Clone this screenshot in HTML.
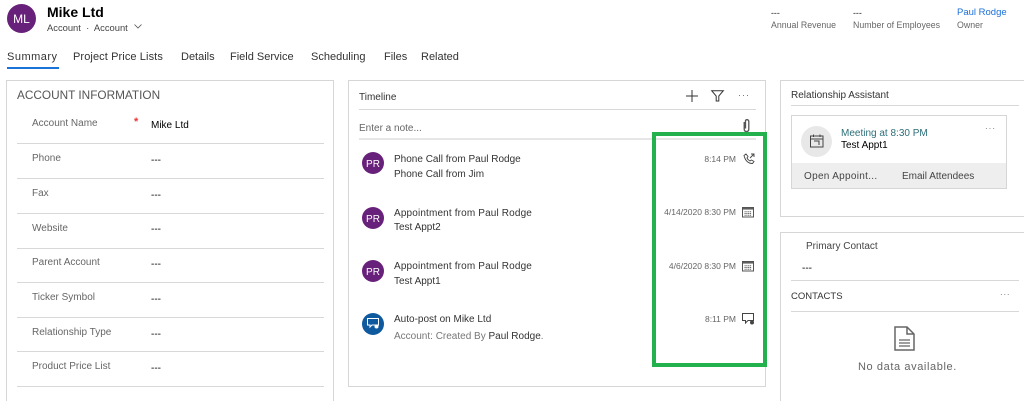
<!DOCTYPE html>
<html><head><meta charset="utf-8"><style>
html,body{margin:0;padding:0;background:#fff;overflow:hidden}
#r{position:relative;width:1024px;height:401px;overflow:hidden;background:#fff;font-family:"Liberation Sans",sans-serif;filter:blur(.3px)}
.t{position:absolute;white-space:nowrap;line-height:14px;font-size:10px;color:#333;margin-top:2px}
.l{position:absolute;height:1px;background:#d8d8d8}
.p{position:absolute;box-sizing:border-box;border:1px solid #d6d6d6;background:#fff}
.c{position:absolute;border-radius:50%;color:#fff;text-align:center;font-size:10px;line-height:25px;width:22px;height:22px;background:#68217a}
.g{color:#666}.k{color:#000}
.m{margin-top:1px}.z{margin-top:0}
.h{font-size:8.800px}
.tab{font-size:11px;margin-top:1px}
.a{letter-spacing:.15px}
.r{position:absolute;white-space:nowrap;line-height:14px;font-size:8.500px;color:#666;text-align:right;right:288px;margin-top:2px}
svg{position:absolute;overflow:visible}
</style></head><body><div id="r">
<div class="c" style="left:7px;top:4px;width:29px;height:29px;line-height:31px;font-size:12px">ML</div>
<div class="t k z" style="left:47px;top:5px;font-size:14px;font-weight:bold;line-height:15px">Mike Ltd</div>
<div class="t m" style="left:47px;top:20px;font-size:9.400px;color:#444">Account &nbsp;·&nbsp; Account</div>
<svg style="left:134px;top:24px" width="8" height="5"><path d="M.5.5 4 4 7.500.5" fill="none" stroke="#555" stroke-width=".8"/></svg>

<div class="t z h" style="left:771px;top:6px;color:#222">---</div>
<div class="t g z h" style="left:771px;top:18px">Annual Revenue</div>
<div class="t z h" style="left:853px;top:6px;color:#222">---</div>
<div class="t g z h" style="left:853px;top:18px">Number of Employees</div>
<div class="t z" style="left:957px;top:6px;font-size:9.500px;color:#1a6fd8">Paul Rodge</div>
<div class="t g z h" style="left:957px;top:18px">Owner</div>

<div class="t tab" style="left:7px;top:49px;letter-spacing:.5px">Summary</div>
<div class="t tab" style="left:73px;top:49px;letter-spacing:.1px">Project Price Lists</div>
<div class="t tab" style="left:181px;top:49px">Details</div>
<div class="t tab" style="left:230px;top:49px">Field Service</div>
<div class="t tab" style="left:311px;top:49px">Scheduling</div>
<div class="t tab" style="left:384px;top:49px">Files</div>
<div class="t tab" style="left:421px;top:49px">Related</div>
<div style="position:absolute;left:7px;top:67px;width:52px;height:2px;background:#1a73d8"></div>

<div class="p" style="left:6px;top:80px;width:328px;height:321px;border-bottom:0"></div>
<div class="t z" style="left:17px;top:88px;font-size:11.800px;color:#555">ACCOUNT INFORMATION</div>
<div class="t g" style="left:32px;top:115px">Account Name</div>
<div class="t z" style="left:134px;top:115px;color:#e33;font-size:11px;font-weight:bold">*</div>
<div class="t k" style="left:151px;top:117px">Mike Ltd</div>
<div class="l" style="left:17px;top:143px;width:307px"></div>
<div class="t g" style="left:32px;top:150px">Phone</div><div class="t k" style="left:151px;top:152px">---</div>
<div class="l" style="left:17px;top:178px;width:307px"></div>
<div class="t g" style="left:32px;top:185px">Fax</div><div class="t k" style="left:151px;top:187px">---</div>
<div class="l" style="left:17px;top:213px;width:307px"></div>
<div class="t g" style="left:32px;top:220px">Website</div><div class="t k" style="left:151px;top:221px">---</div>
<div class="l" style="left:17px;top:248px;width:307px"></div>
<div class="t g" style="left:32px;top:254px">Parent Account</div><div class="t k" style="left:151px;top:256px">---</div>
<div class="l" style="left:17px;top:282px;width:307px"></div>
<div class="t g" style="left:32px;top:289px">Ticker Symbol</div><div class="t k" style="left:151px;top:291px">---</div>
<div class="l" style="left:17px;top:317px;width:307px"></div>
<div class="t g" style="left:32px;top:324px">Relationship Type</div><div class="t k" style="left:151px;top:326px">---</div>
<div class="l" style="left:17px;top:351px;width:307px"></div>
<div class="t g" style="left:32px;top:358px">Product Price List</div><div class="t k" style="left:151px;top:360px">---</div>
<div class="l" style="left:17px;top:386px;width:307px"></div>

<div class="p" style="left:348px;top:80px;width:418px;height:307px"></div>
<div class="t" style="left:359px;top:89px">Timeline</div>
<div class="l" style="left:359px;top:109px;width:397px"></div>
<svg style="left:686px;top:90px" width="12" height="12"><path d="M6 0V12M0 6H12" stroke="#333" stroke-width="1"/></svg>
<svg style="left:711px;top:90px" width="13" height="12"><path d="M.7.700H12.300L7.800 6V11H5.200V6Z" fill="none" stroke="#333" stroke-width="1"/></svg>
<div class="t g z" style="left:738px;top:88px;font-size:9px;letter-spacing:1px">···</div>
<div class="t g" style="left:359px;top:120px">Enter a note...</div>
<svg style="left:743px;top:119px" width="7" height="13"><path d="M1.200 3V10Q1.200 12.500 3.500 12.500T5.800 10V2.500Q5.800.7 4 .7T2.500 2.500V9.500" fill="none" stroke="#555" stroke-width="1.300"/></svg>
<div class="l" style="left:359px;top:138px;width:397px;background:#e6e6e6;height:2px"></div>

<div class="c" style="left:362px;top:152px">PR</div>
<div class="t" style="left:394px;top:151px">Phone Call from Paul Rodge</div>
<div class="t" style="left:394px;top:166px">Phone Call from Jim</div>
<div class="r" style="top:150px">8:14 PM</div>
<svg style="left:743px;top:153px" width="12" height="12"><path d="M1 2.500 3 1l2 2.500-1 1.500q1 2 3 3l1.500-1L11 8.500 9.500 10.500Q3 10.500 1 2.500ZM7 5 11 1M8 1H11V4" fill="none" stroke="#444" stroke-width=".9"/></svg>

<div class="c" style="left:362px;top:207px">PR</div>
<div class="t a" style="left:394px;top:205px">Appointment from Paul Rodge</div>
<div class="t" style="left:394px;top:219px">Test Appt2</div>
<div class="r" style="top:203px">4/14/2020 8:30 PM</div>
<svg style="left:742px;top:206px" width="12" height="12"><path d="M.5 1.500H11.500V11H.5Z" fill="none" stroke="#555" stroke-width="1"/><path d="M.5 2.800H11.500" stroke="#555" stroke-width="1.500"/><path d="M2.500 5.800H9.500M2.500 7.500H9.500M2.500 9.200H9.500" stroke="#666" stroke-width="1" stroke-dasharray="1.200 .6"/></svg>

<div class="c" style="left:362px;top:260px">PR</div>
<div class="t a" style="left:394px;top:258px">Appointment from Paul Rodge</div>
<div class="t" style="left:394px;top:273px">Test Appt1</div>
<div class="r" style="top:257px">4/6/2020 8:30 PM</div>
<svg style="left:742px;top:260px" width="12" height="12"><path d="M.5 1.500H11.500V11H.5Z" fill="none" stroke="#555" stroke-width="1"/><path d="M.5 2.800H11.500" stroke="#555" stroke-width="1.500"/><path d="M2.500 5.800H9.500M2.500 7.500H9.500M2.500 9.200H9.500" stroke="#666" stroke-width="1" stroke-dasharray="1.200 .6"/></svg>

<div class="c" style="left:362px;top:313px;background:#0f5a9e"></div>
<svg style="left:367px;top:318px" width="13" height="12"><path d="M.5.500H11.500V7H5L3 9V7H.5Z" fill="none" stroke="#fff" stroke-width="1"/><circle cx="9.500" cy="8.500" r="2" fill="#fff"/></svg>
<div class="t" style="left:394px;top:311px">Auto-post on Mike Ltd</div>
<div class="t" style="left:394px;top:328px;color:#777">Account: Created By <span style="color:#333">Paul Rodge</span>.</div>
<div class="r" style="top:310px">8:11 PM</div>
<svg style="left:742px;top:313px" width="13" height="13"><path d="M.5.500H11.500V7.500H6L3.500 10V7.500H.5Z" fill="none" stroke="#444" stroke-width="1"/><circle cx="10" cy="9.500" r="2" fill="#444"/></svg>

<div style="position:absolute;box-sizing:border-box;left:652px;top:132px;width:115px;height:235px;border:4px solid #22b14c"></div>

<div class="p" style="left:780px;top:80px;width:244px;height:137px;border-right:0"></div>
<div class="t m" style="left:791px;top:88px">Relationship Assistant</div>
<div class="l" style="left:791px;top:105px;width:228px"></div>
<div class="p" style="left:791px;top:115px;width:216px;height:74px"></div>
<div style="position:absolute;left:792px;top:163px;width:214px;height:25px;background:#eee"></div>
<div style="position:absolute;left:801px;top:126px;width:31px;height:31px;border-radius:50%;background:#e8e8e8"></div>
<svg style="left:810px;top:134px" width="14" height="14"><path d="M.5 2H13V13H.5ZM.5 5H13M3.500 .5V3M10 .5V3" fill="none" stroke="#444" stroke-width="1"/><path d="M4 7H9V11" fill="none" stroke="#444"/></svg>
<div class="t" style="left:841px;top:125px;color:#2b6e78">Meeting at 8:30 PM</div>
<div class="t k" style="left:841px;top:137px">Test Appt1</div>
<div class="t g z" style="left:985px;top:122px;font-size:8px;letter-spacing:1px">···</div>
<div class="t" style="left:804px;top:168px;color:#444;letter-spacing:.3px">Open Appoint...</div>
<div class="t" style="left:902px;top:168px;color:#444">Email Attendees</div>

<div class="p" style="left:780px;top:232px;width:244px;height:169px;border-right:0;border-bottom:0"></div>
<div class="t" style="left:806px;top:238px;color:#444">Primary Contact</div>
<div class="t k" style="left:802px;top:260px">---</div>
<div class="l" style="left:791px;top:280px;width:228px"></div>
<div class="t m" style="left:791px;top:289px;font-size:9.500px;color:#333">CONTACTS</div>
<div class="t g z" style="left:1000px;top:288px;font-size:8px;letter-spacing:.8px">···</div>
<div class="l" style="left:791px;top:311px;width:228px"></div>
<svg style="left:894px;top:326px" width="21" height="25"><path d="M1 1H13L20 8V24H1ZM13 1V8H20" fill="none" stroke="#666" stroke-width="1.500"/><path d="M5 14H16M5 17H16M5 20H16" stroke="#666" stroke-width="1.200"/></svg>
<div class="t g m" style="left:858px;top:359px;font-size:11px;letter-spacing:.6px">No data available.</div>
</div></body></html>
